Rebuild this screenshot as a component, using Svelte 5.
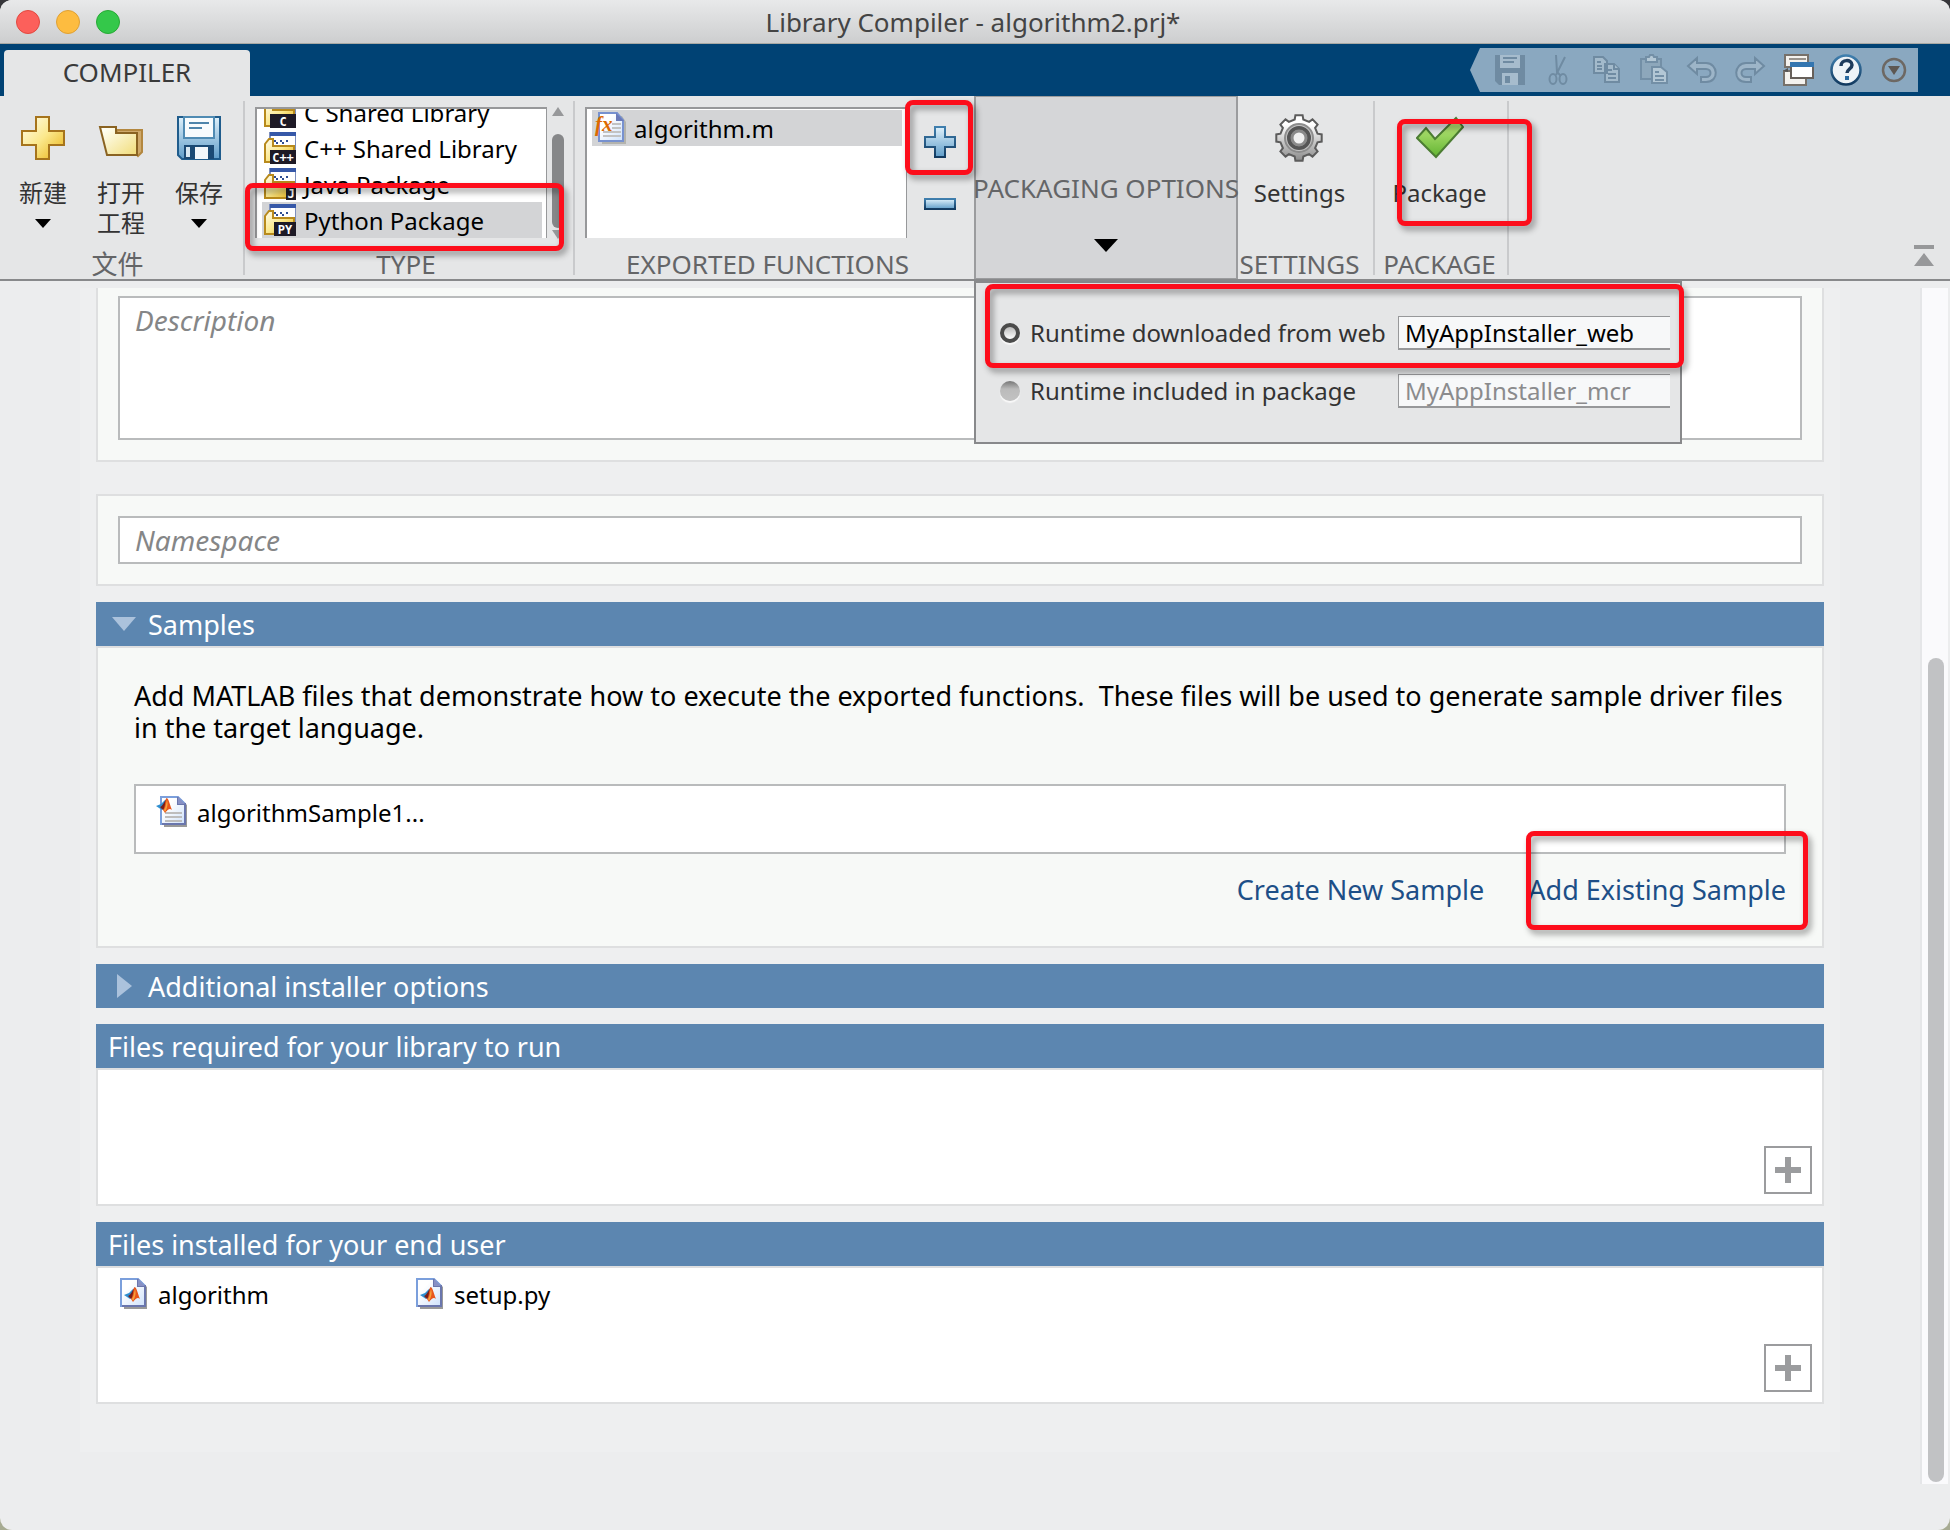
<script>
	let runtime = 'web';
	let webInstaller = 'MyAppInstaller_web';
	let mcrInstaller = 'MyAppInstaller_mcr';
	let selectedType = 'Python Package';
	let description = '';
	let namespace = '';
	let samplesOpen = true;

	const types = [
		{ name: 'C Shared Library', badge: 'C', x: 3, w: 13 },
		{ name: 'C++ Shared Library', badge: 'C++', x: 3, w: 13 },
		{ name: 'Java Package', badge: 'J', x: 11, w: 5 },
		{ name: 'Python Package', badge: 'PY', x: 5, w: 11 }
	];
	const installed = ['algorithm', 'setup.py'];

	// outline of a toothed wheel centred on 24,24
	function gear(teeth, outer, inner) {
		const step = (Math.PI * 2) / teeth;
		const points = [];
		for (let i = 0; i < teeth; i++) {
			const a = i * step - Math.PI / 2;
			for (const [r, d] of [[inner, -0.29], [outer, -0.2], [outer, 0.2], [inner, 0.29]]) {
				points.push((24 + r * Math.cos(a + d * step)).toFixed(1) + ',' + (24 + r * Math.sin(a + d * step)).toFixed(1));
			}
		}
		return points.join(' ');
	}
</script>

{#snippet page()}
	<path d="M4 3h17l6 6v22H4z" fill="#999" />
	<path d="M1 1h17l7 7v20H1z" fill="url(#paper)" stroke="#7b9fdc" stroke-width="2" />
	<path d="M18 1v7h7v20H2" fill="none" stroke="#6a76ad" stroke-width="2" />
	<path d="M18 1l7 7h-7z" fill="#8790c4" />
{/snippet}

{#snippet membrane()}
	<path d="M0 8l5-2 4-4 1 5-4 5z" fill="#2f8fd0" />
	<path d="M4 9c3-1 5-7 7-9v13c-1 0-2-2-4-1z" fill="#7a1f1a" />
	<path d="M10 1c2-3 3 3 6 11-2-2-4-1-7 3l-2-3c2-2 2-8 3-11z" fill="#e8561c" />
	<path d="M11 2c1 3 1 7-2 12l-1-2c2-3 2-7 3-10z" fill="#f6a13c" />
{/snippet}

<svg class="defs" aria-hidden="true">
	<defs>
		<linearGradient id="gold" x1="0" y1="0" x2="1" y2="1">
			<stop offset="0" stop-color="#fffdf0" />
			<stop offset=".5" stop-color="#fbe88c" />
			<stop offset="1" stop-color="#e8b010" />
		</linearGradient>
		<linearGradient id="folder" x1="0" y1="0" x2="1" y2="1">
			<stop offset=".1" stop-color="#fffff4" />
			<stop offset="1" stop-color="#f1dc78" />
		</linearGradient>
		<linearGradient id="blue" x1="0" y1="0" x2="0" y2="1">
			<stop offset="0" stop-color="#dff1fb" />
			<stop offset="1" stop-color="#5f9dc9" />
		</linearGradient>
		<linearGradient id="edge" x1="0" y1="0" x2="0" y2="1">
			<stop offset="0" stop-color="#3f7fae" />
			<stop offset="1" stop-color="#123a60" />
		</linearGradient>
		<linearGradient id="steel" x1="0" y1="0" x2="0" y2="1">
			<stop offset=".2" stop-color="#fff" />
			<stop offset="1" stop-color="#8b8b8b" />
		</linearGradient>
		<linearGradient id="green" x1="0" y1="0" x2="0" y2="1">
			<stop offset="0" stop-color="#c8ef84" />
			<stop offset="1" stop-color="#62b432" />
		</linearGradient>
		<linearGradient id="paper" x1="0" y1="0" x2="1" y2="1">
			<stop offset=".3" stop-color="#fff" />
			<stop offset="1" stop-color="#cfe2fb" />
		</linearGradient>
	</defs>
</svg>

<div class="window">
	<header class="titlebar">
		<div class="lights">
			<button class="light close" aria-label="Close"></button>
			<button class="light minimize" aria-label="Minimize"></button>
			<button class="light zoom" aria-label="Zoom"></button>
		</div>
		<h1>Library Compiler - algorithm2.prj*</h1>
	</header>

	<nav class="tabs">
		<button class="tab">COMPILER</button>
		<div class="quick">
			<button aria-label="Save" disabled>
				<svg viewBox="0 0 32 32"><path d="M1 1h30v30H5l-4-4z" fill="#6f8ba2" /><path d="M6 1h20v13H6z" fill="#a6bccd" /><path d="M9 4h14M9 8h11" stroke="#6f8ba2" stroke-width="2" /><path d="M8 19h16v12H8z" fill="#a6bccd" /><path d="M11 22h5v7h-5z" fill="#6f8ba2" /></svg>
			</button>
			<button aria-label="Cut" disabled>
				<svg viewBox="0 0 32 32" fill="none" stroke="#6f8ba2" stroke-width="2"><path d="M23 3L14 21M14 1l1 17 4 4" /><ellipse cx="11" cy="25" rx="3.5" ry="5" /><ellipse cx="21" cy="25" rx="3.5" ry="5" /></svg>
			</button>
			<button aria-label="Copy" disabled>
				<svg viewBox="0 0 32 32" fill="#a3bacb" stroke="#6f8ba2" stroke-width="2"><path d="M4 3h9l4 4v12H4zM15 10h9l5 5v13H15z" /><path d="M7 8h4M7 12h5M7 15h5M18 16h4M18 20h8M18 24h8M24 10v5h5" /></svg>
			</button>
			<button aria-label="Paste" disabled>
				<svg viewBox="0 0 32 32" fill="#8da7bb" stroke="#738fa6" stroke-width="2"><path d="M3 5h20v20H3z" /><path d="M8 3h3l1-2h3l1 2h3v5H8z" fill="#b3c7d5" /><path d="M14 13h9l6 5v11H14z" fill="#b3c7d5" /><path d="M17 18h4M17 22h9M17 26h9" /></svg>
			</button>
			<button aria-label="Undo" disabled>
				<svg viewBox="0 0 32 32"><path d="M2 12l9-8v5h9c12 0 14 19 0 19h-5v-5h5c6 0 6-8 0-8h-9v5z" fill="#9db5c8" stroke="#6f8ba2" stroke-width="2" /></svg>
			</button>
			<button aria-label="Redo" disabled>
				<svg viewBox="0 0 32 32"><path d="M30 12l-9-8v5h-9c-12 0-14 19 0 19h5v-5h-5c-6 0-6-8 0-8h9v5z" fill="#9db5c8" stroke="#6f8ba2" stroke-width="2" /></svg>
			</button>
			<button aria-label="Switch windows">
				<svg viewBox="0 0 32 32"><path d="M3 1h23v12H3zM2 17h8v5h14v9H2z" fill="#f4f2ee" stroke="#77716a" stroke-width="2" /><path d="M7 5h17" stroke="#99938c" stroke-width="2" /><path d="M1 17l5-3v4z" fill="#555" /><path d="M9 9h22v15H9z" fill="#fff" stroke="#67605a" stroke-width="2" /><path d="M8 8h24v5H8z" fill="#3476b0" /></svg>
			</button>
			<button aria-label="Help">
				<svg viewBox="0 0 32 32"><circle cx="16" cy="16" r="14.5" fill="#eef3f7" stroke="url(#edge)" stroke-width="2.5" /><path d="M11 12c0-7 11-7 11-1 0 4-5 4-5 8" fill="none" stroke="#1f3c5c" stroke-width="3.5" /><path d="M15 22h4v4h-4z" fill="#2b6aa0" /></svg>
			</button>
			<button aria-label="More">
				<svg viewBox="0 0 32 32"><circle cx="16" cy="16" r="11" fill="none" stroke="#6d6863" stroke-width="2.5" /><path d="M10 12h12l-6 9z" fill="#5d5853" /></svg>
			</button>
		</div>
	</nav>

	<div class="ribbon">
		<section class="group file">
			<div class="tools">
				<button class="tool">
					<svg viewBox="0 0 48 48"><path d="M17 3h13v14h15v14H30v14H17V31H3V17h14z" fill="url(#gold)" stroke="#a6741c" stroke-width="2" /></svg>
					<span>新建</span>
					<i class="caret"></i>
				</button>
				<button class="tool">
					<svg viewBox="0 0 48 48"><path d="M18 16h27v22l-4 4z" fill="#cfa96b" stroke="#b3873f" stroke-width="2" /><path d="M3 13h16v6h21v22H10z" fill="url(#folder)" stroke="#8a6322" stroke-width="2" /></svg>
					<span>打开<br />工程</span>
				</button>
				<button class="tool">
					<svg viewBox="0 0 48 48"><path d="M3 3h42v42H7l-4-4z" fill="url(#blue)" stroke="#1f5c8c" stroke-width="2" /><path d="M9 3h30v21H9z" fill="#f7fbfd" stroke="#4f8bb3" stroke-width="2" /><path d="M14 9h20M14 14h13" stroke="#4d84ab" stroke-width="2" /><path d="M9 31h30v14H9z" fill="#1b4a74" /><path d="M20 33h13v12H20z" fill="#f2f7fa" /><path d="M11 33h4v10h-4z" fill="#d8e8f2" /></svg>
					<span>保存</span>
					<i class="caret"></i>
				</button>
			</div>
			<h2>文件</h2>
		</section>

		<section class="group type">
			<div class="row">
				<div class="listbox">
					{#each types as type}
						<button class="item" class:selected={type.name == selectedType} on:click={() => (selectedType = type.name)}>
							<svg viewBox="0 0 16 16">
								<path d="M3 0h13v9H3z" fill="#fff" stroke="#7d8fbd" />
								<path d="M3 0h13v2H3z" fill="#3658a8" />
								<path d="M5 4h1v1H5zM8 4h1v1H8zM11 4h1v1h-1zM6 5h1v1H6zM9 5h1v1H9z" fill="#2f4e93" />
								<path d="M.5 15V6l2-2.500h2V7H15v8z" fill="url(#gold)" stroke="#b88a1c" />
								<rect x={type.x} y="9" width={type.w} height="7" fill="#1e1a26" />
								<text class="badge" x={type.x + type.w / 2} y="15" text-anchor="middle">{type.badge}</text>
							</svg>
							{type.name}
						</button>
					{/each}
				</div>
				<div class="listscroll">
					<i class="up"></i>
					<i class="thumb"></i>
					<i class="down"></i>
				</div>
			</div>
			<h2>TYPE</h2>
			<div class="mark mark-type"></div>
		</section>

		<section class="group exported">
			<div class="row">
				<div class="listbox functions">
					<button class="item selected">
						<svg viewBox="0 0 32 32">
							<path d="M8 4h20l4 6v22H8z" fill="#b3b3ad" />
							<path d="M5 1h18l6 7v21H5z" fill="url(#paper)" stroke="#7791cf" stroke-width="2" />
							<path d="M22 1l8 8h-8z" fill="#6a79b8" />
							<path d="M18 12h9M18 16h9M9 20h18M9 24h18" stroke="#c2c2c2" stroke-width="2" />
							<text class="fx" x="1" y="19">fx</text>
						</svg>
						algorithm.m
					</button>
				</div>
				<div class="edit">
					<button aria-label="Add exported function">
						<svg viewBox="0 0 32 32"><path d="M11 1h10v10h10v10H21v10H11V21H1V11h10z" fill="url(#blue)" stroke="url(#edge)" stroke-width="2" /></svg>
						<span class="mark mark-add"></span>
					</button>
					<button aria-label="Remove exported function">
						<svg viewBox="0 0 32 32"><path d="M1 11h30v10H1z" fill="url(#blue)" stroke="url(#edge)" stroke-width="2" /></svg>
					</button>
				</div>
			</div>
			<h2>EXPORTED FUNCTIONS</h2>
		</section>

		<section class="packaging">
			<button class="packaging-toggle">
				<span>PACKAGING OPTIONS</span>
				<i class="caret large"></i>
			</button>
			<div class="popup">
				<label><input type="radio" value="web" bind:group={runtime} />Runtime downloaded from web</label>
				<input type="text" aria-label="Web installer name" bind:value={webInstaller} disabled={runtime != 'web'} />
				<label><input type="radio" value="mcr" bind:group={runtime} />Runtime included in package</label>
				<input type="text" aria-label="Package installer name" bind:value={mcrInstaller} disabled={runtime != 'mcr'} />
				<div class="mark mark-runtime"></div>
			</div>
		</section>

		<section class="group settings">
			<div class="tools">
				<button class="tool">
					<svg viewBox="0 0 48 48">
						<polygon points={gear(8, 23, 19)} fill="url(#steel)" stroke="#5c5c5c" stroke-width="2" />
						<circle cx="24" cy="24" r="14" fill="#c4c4c4" stroke="#8c8c8c" stroke-width="2" />
						<circle cx="24" cy="24" r="10" fill="none" stroke="#555" stroke-width="4" />
						<circle cx="24" cy="24" r="7" fill="#f0f0f0" stroke="#8a8a8a" stroke-width="3" />
					</svg>
					<span>Settings</span>
				</button>
			</div>
			<h2>SETTINGS</h2>
		</section>

		<section class="group package">
			<div class="tools">
				<button class="tool">
					<svg viewBox="0 0 48 48"><path d="M1 24l9-10 9 11L40 4l7 9-27 30z" fill="url(#green)" stroke="#4c7d33" stroke-width="2" /></svg>
					<span>Package</span>
				</button>
			</div>
			<h2>PACKAGE</h2>
			<div class="mark mark-package"></div>
		</section>

		<button class="collapse" aria-label="Collapse toolstrip">
			<svg viewBox="0 0 20 22"><path d="M0 0h20v4H0zM10 8l10 13H0z" fill="#97989a" /></svg>
		</button>
	</div>

	<div class="viewport">
		<main>
			<div class="column">
				<div class="panel first">
					<textarea placeholder="Description" aria-label="Description" bind:value={description}></textarea>
				</div>
				<div class="panel namespace">
					<input type="text" placeholder="Namespace" aria-label="Namespace" bind:value={namespace} />
				</div>

				<button class="bar" on:click={() => (samplesOpen = !samplesOpen)}>
					<svg viewBox="0 0 24 24"><path d="M0 5h24L12 19z" fill="#abc2dc" /></svg>
					Samples
				</button>
				{#if samplesOpen}
					<div class="panel samples">
						<p>Add MATLAB files that demonstrate how to execute the exported functions.&nbsp; These files will be used to generate sample driver files in the target language.</p>
						<div class="samplebox">
							<svg viewBox="0 0 32 32">
								<g transform="translate(4 0)">{@render page()}<path d="M5 17h17M5 21h17M5 25h17" stroke="#bdbdbd" stroke-width="2" /></g>
								<g transform="translate(0 2)">{@render membrane()}</g>
							</svg>
							algorithmSample1...
						</div>
						<div class="links">
							<a href="#create">Create New Sample</a>
							<a href="#add">Add Existing Sample<span class="mark mark-existing"></span></a>
						</div>
					</div>
				{/if}

				<button class="bar closed">
					<svg viewBox="0 0 24 24"><path d="M5 0l15 12L5 24z" fill="#abc2dc" /></svg>
					Additional installer options
				</button>

				<h3 class="bar">Files required for your library to run</h3>
				<div class="panel files">
					<button class="add" aria-label="Add required file"></button>
				</div>

				<h3 class="bar">Files installed for your end user</h3>
				<div class="panel files">
					{#each installed as file}
						<div class="entry">
							<svg viewBox="0 0 28 32">{@render page()}<g transform="translate(4 9)">{@render membrane()}</g></svg>
							{file}
						</div>
					{/each}
					<button class="add" aria-label="Add installed file"></button>
				</div>
			</div>
		</main>
		<div class="scrollbar"><i></i></div>
	</div>
</div>

<style>
	:global(body) {
		margin: 0;
		background: linear-gradient(#36363a 50%, #a7ab92 50%);
	}
	.defs {
		position: absolute;
		width: 0;
		height: 0;
	}
	.window {
		display: flex;
		flex-direction: column;
		min-height: 100vh;
		border-radius: 12px;
		background: #ecedee;
		overflow: hidden;
		font-family: "Noto Sans", "Noto Sans CJK SC", sans-serif;
		font-size: 24px;
		color: #000;
	}
	button, input, textarea {
		font: inherit;
		color: inherit;
		margin: 0;
		padding: 0;
		border: none;
		background: none;
		border-radius: 0;
		outline: none;
		box-sizing: border-box;
	}
	h1, h2, h3, p {
		margin: 0;
		font-weight: normal;
	}
	svg {
		display: block;
		flex: none;
	}

	.titlebar {
		position: relative;
		display: flex;
		align-items: center;
		height: 43px;
		background: linear-gradient(#e8e9ea, #cdcecf);
		border-bottom: 1px solid #a9a9a4;
	}
	.titlebar h1 {
		flex: 1;
		text-align: center;
		font-size: 26px;
		color: #444;
		padding-right: 124px;
	}
	.lights {
		display: flex;
		gap: 16px;
		width: 104px;
		padding-left: 16px;
	}
	.light {
		width: 24px;
		height: 24px;
		border-radius: 50%;
		border: 1px solid #e2483f;
		background: #fc605b;
	}
	.light.minimize {
		background: #fdbc40;
		border-color: #dfa033;
	}
	.light.zoom {
		background: #34c84a;
		border-color: #27a935;
	}

	.tabs {
		display: flex;
		justify-content: space-between;
		height: 52px;
		padding: 0 32px 0 4px;
		background: #004274;
	}
	.tab {
		align-self: flex-end;
		width: 246px;
		height: 46px;
		padding-bottom: 2px;
		border-radius: 4px 4px 0 0;
		background: #e5e6e7;
		color: #3a3a3a;
		font-size: 26px;
	}
	.quick {
		display: flex;
		align-items: center;
		gap: 16px;
		height: 44px;
		margin-top: 4px;
		padding: 0 8px 0 24px;
		background: #8aa8c0;
		clip-path: polygon(0 50%, 10px 0, 100% 0, 100% 100%, 10px 100%);
	}
	.quick svg {
		width: 32px;
		height: 32px;
	}

	.ribbon {
		position: relative;
		z-index: 1;
		display: flex;
		height: 183px;
		background: #e5e6e7;
		border-bottom: 2px solid #88898b;
	}
	.group {
		position: relative;
		display: flex;
		flex-direction: column;
		justify-content: space-between;
		margin: 5px 0 4px;
		border-right: 2px solid #c9cacc;
		box-sizing: border-box;
	}
	.group h2 {
		padding-bottom: 1px;
		font-size: 26px;
		line-height: 20px;
		text-align: center;
		color: #646567;
	}
	.tools {
		display: flex;
		justify-content: center;
	}
	.tool {
		display: flex;
		flex-direction: column;
		align-items: center;
		padding-top: 13px;
		color: #333;
		line-height: 30px;
	}
	.tool svg {
		width: 48px;
		height: 48px;
		margin-bottom: 16px;
	}
	.caret {
		border: 8px solid transparent;
		border-top: 9px solid #000;
		border-bottom: none;
		margin-top: 11px;
	}
	.caret.large {
		border-width: 13px 12px 0;
	}
	.file {
		width: 245px;
		padding-left: 4px;
	}
	.file .tools {
		justify-content: flex-start;
	}
	.file .tool {
		width: 78px;
	}
	.file h2 {
		padding-right: 12px;
	}
	.type {
		width: 330px;
		padding-left: 10px;
	}
	.type h2 {
		padding-right: 16px;
	}
	.row {
		display: flex;
		padding-top: 6px;
	}
	.listbox {
		display: flex;
		flex-direction: column;
		justify-content: flex-end;
		width: 292px;
		height: 131px;
		padding: 0 4px 0 5px;
		box-sizing: border-box;
		overflow: hidden;
		background: #fff;
		border: solid #97989a;
		border-width: 2px 1px 0 2px;
	}
	.item {
		display: flex;
		flex: none;
		align-items: center;
		gap: 8px;
		height: 36px;
		padding-left: 2px;
		text-align: left;
		white-space: nowrap;
	}
	.item svg {
		width: 32px;
		height: 32px;
	}
	.item.selected {
		background: #d3d4d6;
	}
	.badge {
		font: bold 6px "DejaVu Sans Mono", monospace;
		fill: #fff;
	}
	.fx {
		font: italic bold 21px "Liberation Serif", serif;
		fill: #dd6a00;
	}
	.functions {
		justify-content: flex-start;
		width: 322px;
		padding-top: 1px;
	}
	.listscroll {
		display: flex;
		flex-direction: column;
		align-items: center;
		width: 12px;
		margin-left: 5px;
	}
	.up {
		border: 6px solid transparent;
		border-top: none;
		border-bottom: 9px solid #97989a;
	}
	.down {
		border: 6px solid transparent;
		border-bottom: none;
		border-top: 9px solid #97989a;
	}
	.thumb {
		width: 12px;
		height: 94px;
		margin: 18px 0 2px;
		border-radius: 6px;
		background: #868789;
	}
	.exported {
		width: 399px;
		padding-left: 10px;
		border-right: none;
	}
	.exported h2 {
		padding-right: 24px;
	}
	.edit {
		display: flex;
		flex-direction: column;
		gap: 30px;
		padding: 19px 0 0 17px;
	}
	.edit button {
		position: relative;
	}
	.edit svg {
		width: 32px;
		height: 32px;
	}

	.packaging {
		position: relative;
		width: 264px;
	}
	.packaging-toggle {
		display: flex;
		flex-direction: column;
		align-items: center;
		width: 100%;
		height: 100%;
		padding-top: 73px;
		border: 2px solid #9b9c9e;
		border-width: 1px 2px;
		background: #d5d6d8;
		color: #646567;
		font-size: 26px;
		line-height: 36px;
		white-space: nowrap;
	}
	.packaging-toggle .caret {
		margin-top: 33px;
	}
	.popup {
		position: absolute;
		top: 185px;
		left: 0;
		display: grid;
		grid-template-columns: 390px 1fr;
		gap: 24px 8px;
		width: 708px;
		padding: 33px 10px 34px 24px;
		box-sizing: border-box;
		border: 2px solid #88898b;
		background: #e5e6e7;
		color: #333;
	}
	.popup label {
		display: flex;
		align-items: center;
		gap: 10px;
		line-height: 34px;
		white-space: nowrap;
	}
	.popup input[type="radio"] {
		appearance: none;
		width: 20px;
		height: 20px;
		border-radius: 50%;
		background: linear-gradient(#777, #bbb 40%, #c2c2c2);
		box-shadow: 0 2px 1px #f8f8f8;
	}
	.popup input[type="radio"]:checked {
		border: 4px solid #4b4b4b;
		background: linear-gradient(#bbb, #fff);
	}
	.popup input[type="text"] {
		height: 34px;
		min-width: 0;
		padding: 0 6px;
		background: #f7f8f9;
		border: solid #97989a;
		border-width: 1px 0 2px 1px;
		color: #000;
	}
	.popup input[type="text"]:disabled {
		color: #8b8b8d;
	}

	.settings {
		width: 137px;
		padding-right: 12px;
	}
	.package {
		width: 134px;
		padding-right: 3px;
	}
	.collapse {
		margin: 0 16px 12px auto;
		align-self: flex-end;
	}
	.collapse svg {
		width: 20px;
		height: 22px;
	}

	/* highlight frames drawn over the controls */
	.mark {
		position: absolute;
		z-index: 2;
		box-sizing: border-box;
		border: 5px solid #fd0d1b;
		border-radius: 8px;
		filter: drop-shadow(3px 4px 3px rgba(0, 0, 0, .4));
		pointer-events: none;
	}
	.mark-type {
		left: 0;
		top: 82px;
		width: 319px;
		height: 68px;
	}
	.mark-add {
		inset: -26px -17px -17px -19px;
	}
	.mark-runtime {
		inset: 1px -4px 74px 9px;
	}
	.mark-package {
		left: 22px;
		top: 18px;
		width: 135px;
		height: 107px;
	}
	.mark-existing {
		inset: -42px -22px -23px -2px;
	}

	.viewport {
		display: flex;
		flex: 1;
		margin: 7px 2px 46px 0;
	}
	main {
		flex: 1;
		padding: 0 80px 32px;
	}
	.column {
		padding: 0 16px 32px;
		background: #eeeff0;
	}
	.panel {
		box-sizing: border-box;
		margin-bottom: 16px;
		border: 2px solid #dedfe0;
		background: #f7f9f7;
	}
	.panel.first {
		margin-bottom: 32px;
		padding: 8px 20px 20px;
		border-top: none;
	}
	.panel.namespace {
		padding: 20px;
	}
	.panel textarea, .panel input {
		display: block;
		width: 100%;
		height: 48px;
		padding: 0 15px;
		border: 2px solid #b9bbbc;
		background: #fff;
		font-size: 28px;
		resize: none;
	}
	.panel textarea {
		height: 144px;
		padding-top: 3px;
	}
	.panel ::placeholder {
		color: #858687;
		font-style: italic;
		opacity: 1;
	}
	.bar {
		display: flex;
		align-items: center;
		gap: 12px;
		width: 100%;
		height: 44px;
		box-sizing: border-box;
		padding-left: 16px;
		background: #5c86b0;
		color: #fff;
		font-size: 27px;
		text-align: left;
	}
	.bar svg {
		width: 24px;
		height: 24px;
	}
	h3.bar {
		padding-left: 12px;
	}
	.bar.closed {
		margin-bottom: 16px;
	}
	.samples {
		padding: 32px 36px 39px;
	}
	.samples p {
		font-size: 27px;
		line-height: 32px;
	}
	.samplebox {
		display: flex;
		gap: 9px;
		height: 70px;
		margin-top: 40px;
		padding: 10px 20px;
		box-sizing: border-box;
		border: 2px solid #b9bbbc;
		background: #fff;
		line-height: 34px;
	}
	.samplebox svg {
		width: 32px;
		height: 32px;
	}
	.links {
		display: flex;
		justify-content: flex-end;
		gap: 44px;
		margin-top: 19px;
		font-size: 27px;
		line-height: 34px;
	}
	.links a {
		position: relative;
		color: #1d4f87;
		text-decoration: none;
	}
	.files {
		position: relative;
		display: flex;
		height: 138px;
		padding: 10px 22px;
		background: #fff;
	}
	.entry {
		display: flex;
		gap: 10px;
		width: 296px;
		line-height: 34px;
	}
	.entry svg {
		width: 28px;
		height: 32px;
	}
	.add {
		position: absolute;
		right: 10px;
		bottom: 10px;
		width: 48px;
		height: 48px;
		border: 2px solid #9b9c9e;
		background:
			linear-gradient(#9b9c9e, #9b9c9e) center / 26px 6px no-repeat,
			linear-gradient(#9b9c9e, #9b9c9e) center / 6px 26px no-repeat;
	}
	.scrollbar {
		display: flex;
		align-items: flex-end;
		width: 28px;
		box-sizing: border-box;
		padding: 0 4px 2px 6px;
		border-left: 2px solid #e5e6e8;
		background: #fafafc;
	}
	.scrollbar i {
		width: 16px;
		height: 69%;
		border-radius: 8px;
		background: #c1c2c4;
	}
</style>
